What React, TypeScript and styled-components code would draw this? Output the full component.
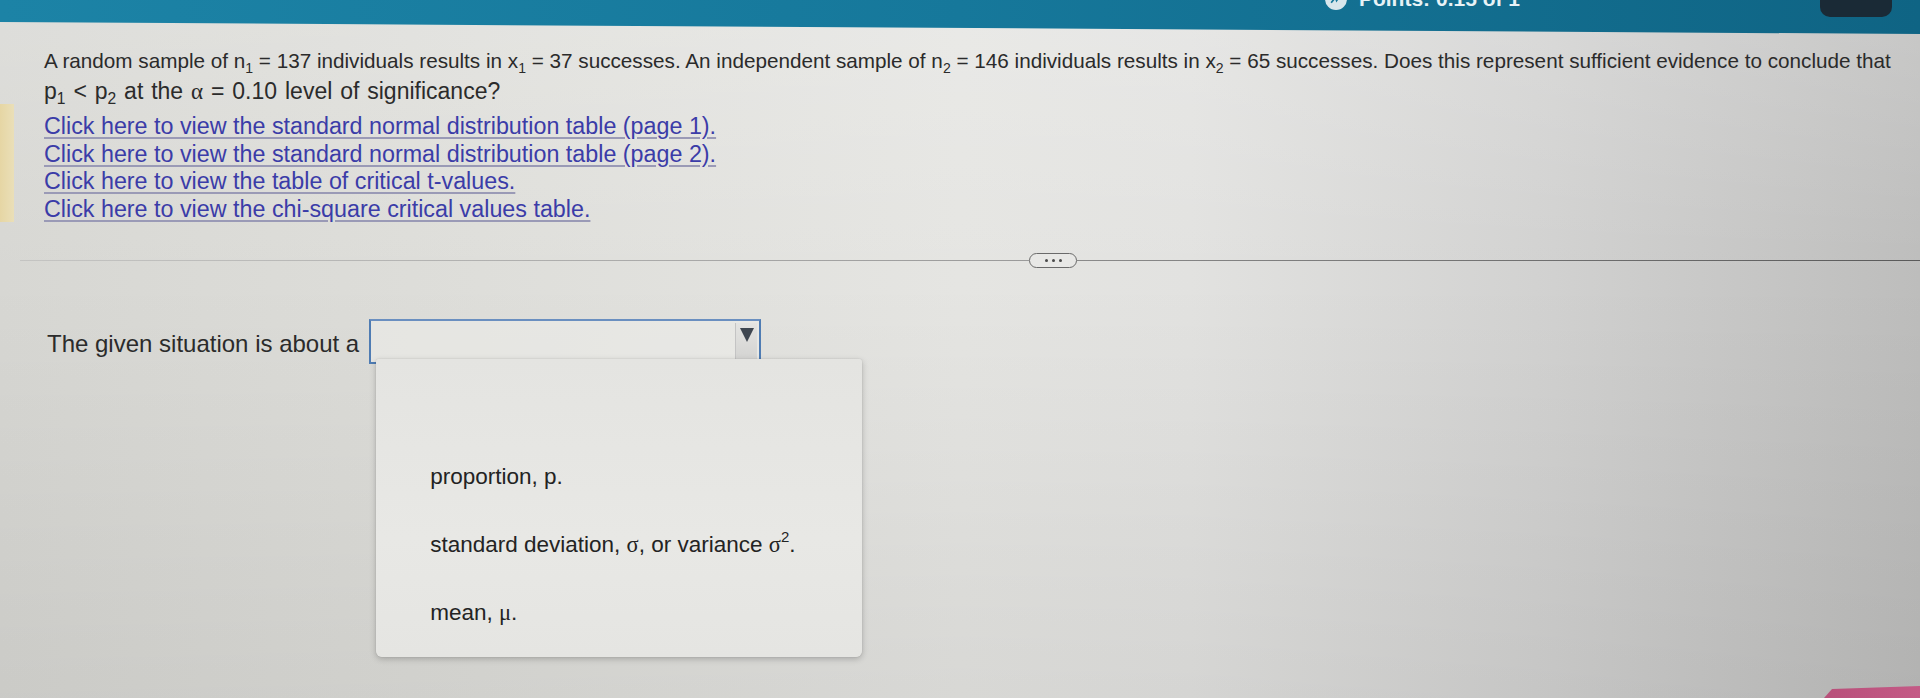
import * as React from 'react';
import styled, { createGlobalStyle } from 'styled-components';

const GlobalStyle = createGlobalStyle`
  html, body {
    margin: 0;
    padding: 0;
    background: #d4d4d0;
  }
  body {
    font-family: "Liberation Sans", Arial, sans-serif;
  }
`;

const Screen = styled.div`
  position: relative;
  width: 1920px;
  height: 698px;
  overflow: hidden;
  display: flex;
  flex-direction: column;
  background:
    linear-gradient(180deg, rgba(255, 255, 255, 0.18) 0%, rgba(255, 255, 255, 0) 40%, rgba(0, 0, 0, 0.06) 100%),
    linear-gradient(90deg, #d7d7d3 0%, #dededa 25%, #e5e5e2 50%, #e2e2e0 62%, #d2d2d1 80%, #bdbdbc 100%);
`;

const TopBar = styled.div`
  height: 34px;
  flex-shrink: 0;
  display: flex;
  align-items: flex-start;
  justify-content: flex-end;
  padding-right: 28px;
  gap: 300px;
  background: linear-gradient(90deg, #1c83a6 0%, #16789b 50%, #0f6484 100%);
  clip-path: polygon(0 0, 100% 0, 100% 34px, 0 22px);
`;

const Points = styled.div`
  display: flex;
  align-items: center;
  gap: 12px;
  margin-top: -13px;
  color: #e8f2f6;
  font-size: 21px;
  font-weight: 700;
`;

const PointsIcon = styled.div`
  width: 22px;
  height: 22px;
  border-radius: 50%;
  background: #d8e6ec;
  display: flex;
  align-items: center;
  justify-content: center;
`;

const DarkButton = styled.div`
  width: 72px;
  height: 17px;
  background: #1a2a36;
  border-radius: 0 0 10px 10px;
`;

const Body = styled.div`
  display: flex;
  flex: 1;
`;

const Gutter = styled.div`
  width: 44px;
  flex-shrink: 0;
`;

const SideTab = styled.div`
  width: 14px;
  height: 118px;
  margin-top: 70px;
  background: linear-gradient(90deg, #e6d6a4, #eadfb8);
`;

const Content = styled.div`
  flex: 1;
  display: flex;
  flex-direction: column;
  padding-top: 12px;
`;

const QuestionLine = styled.div<{ $size: number; $wordGap?: number }>`
  font-size: ${(p) => p.$size}px;
  word-spacing: ${(p) => p.$wordGap ?? 0}px;
  line-height: 30px;
  color: #2b2b2b;
  white-space: nowrap;

  sub {
    font-size: 0.68em;
    vertical-align: -5px;
    line-height: 0;
  }
`;

const Greek = styled.span`
  font-family: "Liberation Serif", "Times New Roman", serif;
`;

const Links = styled.div`
  display: flex;
  flex-direction: column;
  margin-top: 6px;
`;

const LinkLine = styled.a`
  font-size: 23.3px;
  line-height: 27.7px;
  color: #3b3ca8;
  text-decoration: underline;
  text-decoration-color: #9a9ab6;
  text-underline-offset: 3px;
  cursor: pointer;
  width: fit-content;
`;

const DividerRow = styled.div`
  display: flex;
  align-items: center;
  margin: 29px 0 0 -24px;
`;

const Rule = styled.div<{ $tone: string; $width?: number }>`
  flex: ${(p) => (p.$width ? `0 0 ${p.$width}px` : '1')};
  height: 1px;
  background: ${(p) => p.$tone};
`;

const MorePill = styled.div`
  width: 46px;
  height: 13px;
  border: 1.5px solid #6a6a6a;
  border-radius: 8px;
  display: flex;
  align-items: center;
  justify-content: center;
  gap: 4px;
  background: #e8e8e6;
`;

const Dot = styled.span`
  width: 3px;
  height: 3px;
  border-radius: 50%;
  background: #4a4a4a;
`;

const PromptRow = styled.div`
  display: flex;
  align-items: center;
  margin-top: 51px;
`;

const PromptText = styled.span`
  font-size: 24px;
  color: #2b2b2b;
  margin: 6px 10px 0 3px;
`;

const Select = styled.div`
  position: relative;
  width: 388px;
  height: 41px;
  border: 2px solid #4f7cb3;
  border-top-color: #6a8fc0;
  display: flex;
  justify-content: flex-end;
  align-items: stretch;
  background: rgba(236, 236, 234, 0.6);
`;

const ArrowBox = styled.div`
  width: 21px;
  margin: 2px 2px 3px 0;
  border-left: 1px solid #c4c4c4;
  background: linear-gradient(180deg, #e4e4e2, #d4d4d2);
  display: flex;
  justify-content: center;
  padding-top: 5px;
`;

const Triangle = styled.div`
  width: 0;
  height: 0;
  border-left: 7px solid transparent;
  border-right: 7px solid transparent;
  border-top: 14px solid #3e4650;
`;

const Menu = styled.div`
  position: absolute;
  top: 38px;
  left: 5px;
  width: 486px;
  height: 298px;
  box-sizing: border-box;
  padding: 103px 0 0 54px;
  background: linear-gradient(180deg, #e4e4e1 0%, #e8e8e5 60%, #e5e5e2 100%);
  border-radius: 3px 3px 6px 6px;
  box-shadow: 0 2px 6px rgba(0, 0, 0, 0.22), 0 0 1px rgba(0, 0, 0, 0.25);
  display: flex;
  flex-direction: column;
  gap: 38px;
  z-index: 2;
`;

const MenuItem = styled.div`
  font-size: 22.5px;
  line-height: 30px;
  color: #232323;
  white-space: nowrap;

  sup {
    font-size: 15px;
    vertical-align: 10px;
    line-height: 0;
  }
`;

const BottomEdge = styled.div`
  margin-top: auto;
  display: flex;
  justify-content: flex-end;
`;

const PinkStrip = styled.div`
  width: 96px;
  height: 12px;
  background: linear-gradient(90deg, #b8507a, #c45a86);
  clip-path: polygon(8px 3px, 100% 0, 100% 100%, 0 100%);
`;

const links = [
  'Click here to view the standard normal distribution table (page 1).',
  'Click here to view the standard normal distribution table (page 2).',
  'Click here to view the table of critical t-values.',
  'Click here to view the chi-square critical values table.',
];

export default function App() {
  return (
    <Screen>
      <GlobalStyle />
      <TopBar>
        <Points>
          <PointsIcon>
            <svg width="13" height="13" viewBox="0 0 12 12">
              <path d="M2 9 L6 4 L7 7 L10 3" stroke="#16789b" strokeWidth="1.6" fill="none" />
            </svg>
          </PointsIcon>
          Points: 0.15 of 1
        </Points>
        <DarkButton />
      </TopBar>
      <Body>
        <Gutter>
          <SideTab />
        </Gutter>
        <Content>
          <QuestionLine $size={20.7}>
            A random sample of n<sub>1</sub> = 137 individuals results in x<sub>1</sub> = 37 successes. An independent
            sample of n<sub>2</sub> = 146 individuals results in x<sub>2</sub> = 65 successes. Does this represent
            sufficient evidence to conclude that
          </QuestionLine>
          <QuestionLine $size={23} $wordGap={1.5}>
            p<sub>1</sub> &lt; p<sub>2</sub> at the <Greek>α</Greek> = 0.10 level of significance?
          </QuestionLine>
          <Links>
            {links.map((t) => (
              <LinkLine key={t}>{t}</LinkLine>
            ))}
          </Links>
          <DividerRow>
            <Rule $tone="linear-gradient(90deg, #c4c4c2, #9a9a9a)" $width={1009} />
            <MorePill>
              <Dot />
              <Dot />
              <Dot />
            </MorePill>
            <Rule $tone="linear-gradient(90deg, #8a8a8a, #5a5a5a)" />
          </DividerRow>
          <PromptRow>
            <PromptText>The given situation is about a</PromptText>
            <Select>
              <ArrowBox>
                <Triangle />
              </ArrowBox>
              <Menu>
                <MenuItem>proportion, p.</MenuItem>
                <MenuItem>
                  standard deviation, <Greek>σ</Greek>, or variance <Greek>σ</Greek>
                  <sup>2</sup>.
                </MenuItem>
                <MenuItem>
                  mean, <Greek>μ</Greek>.
                </MenuItem>
              </Menu>
            </Select>
          </PromptRow>
          <BottomEdge>
            <PinkStrip />
          </BottomEdge>
        </Content>
      </Body>
    </Screen>
  );
}
